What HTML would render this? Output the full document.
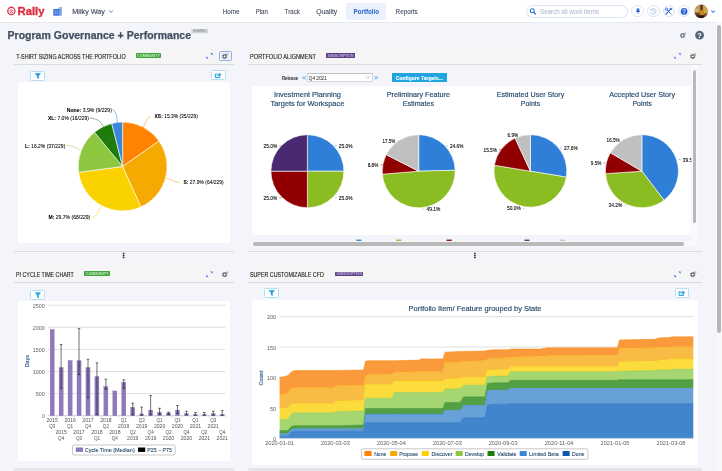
<!DOCTYPE html>
<html><head><meta charset="utf-8"><title>Rally</title>
<style>
html,body{margin:0;padding:0;}
body{width:722px;height:471px;overflow:hidden;background:#f3f5fa;font-family:'Liberation Sans',sans-serif;position:relative;color:#222;}
.abs{position:absolute;}
.hdr{position:absolute;left:0;top:0;width:722px;height:21.5px;background:#fff;border-bottom:0.5px solid #e4e8ef;}
.panel{position:absolute;background:#f5f5f6;}
.badge{position:absolute;height:5.1px;border-radius:0.8px;}
.hr{position:absolute;height:1.15px;background:#d9dbde;}
.white{position:absolute;background:#fff;border-radius:1.2px;}
.btn{position:absolute;border:0.7px solid #b3def5;background:#fff;border-radius:1.5px;box-sizing:border-box;}
.circ{position:absolute;width:12.6px;height:12.6px;border-radius:50%;border:0.6px solid #dbe4f4;box-sizing:border-box;background:#fff;top:4.9px;}
svg{position:absolute;left:0;top:0;overflow:visible;will-change:transform;}
svg text{font-family:'Liberation Sans',sans-serif;white-space:pre;}
</style></head><body>
<div class="hdr"></div>
<div class="abs" style="left:346.3px;top:2.9px;width:39.8px;height:16.9px;background:#ecf2fd;border-radius:1.5px;"></div>
<div class="abs" style="left:525.7px;top:4.6px;width:102.1px;height:13.4px;border:0.7px solid #d9e2f2;border-radius:7px;box-sizing:border-box;background:#fff;"></div>
<div class="circ" style="left:631.3px;"></div>
<div class="circ" style="left:647px;"></div>
<div class="circ" style="left:662.5px;"></div>
<div class="circ" style="left:677.8px;"></div>

<!-- scrollbar -->
<div class="abs" style="left:715.6px;top:22px;width:6.4px;height:449px;background:#f8f8f9;"></div>
<div class="abs" style="left:717.1px;top:25px;width:4px;height:308px;background:#b6b7b9;border-radius:2px;"></div>

<!-- panel backgrounds -->
<div class="panel" style="left:13.5px;top:47.8px;width:221px;height:16px;"></div>
<div class="panel" style="left:247.7px;top:47.8px;width:454.3px;height:16px;"></div>
<div class="panel" style="left:13.5px;top:266px;width:221px;height:16.4px;"></div>
<div class="panel" style="left:247.7px;top:266px;width:454.3px;height:16.4px;"></div>

<!-- panel 1 -->
<div class="badge" style="left:135.6px;top:53px;width:25.8px;background:#3fa53a;"></div>
<div class="hr" style="left:13.5px;top:63.55px;width:220.8px;"></div>
<div class="btn" style="left:219.2px;top:51.4px;width:12.9px;height:9.2px;border-color:#97afe8;background:#eef2f8;border-width:0.8px;"></div>
<div class="btn" style="left:30.3px;top:70.9px;width:15px;height:10.3px;"></div>
<div class="btn" style="left:211px;top:70.3px;width:14.8px;height:9.6px;"></div>
<div class="white" style="left:17.8px;top:82.3px;width:212.2px;height:160.3px;"></div>
<div class="hr" style="left:13.5px;top:250.8px;width:220.8px;height:1.1px;"></div>

<!-- panel 2 -->
<div class="badge" style="left:325.9px;top:53px;width:29.1px;height:4.7px;background:#5b3f85;"></div>
<div class="hr" style="left:247.7px;top:63.55px;width:454.3px;"></div>
<div class="abs" style="left:307px;top:73.1px;width:65.6px;height:9px;border:0.5px solid #d3d6da;border-top-color:#bcc0c5;border-radius:0.8px;box-sizing:border-box;background:#fff;"></div>
<div class="abs" style="left:391.9px;top:73.2px;width:54.8px;height:8.9px;background:#20a4e0;"></div>
<div class="abs" style="left:691.6px;top:64.7px;width:5.4px;height:181.5px;background:#fafafb;"></div>
<div class="abs" style="left:251.9px;top:241px;width:445.1px;height:5.2px;background:#f9f9fa;"></div>
<div class="white" style="left:251.9px;top:86.3px;width:439.4px;height:148.6px;border-radius:0;"></div>
<div class="abs" style="left:253.3px;top:242.3px;width:430.5px;height:3.3px;border-radius:1.65px;background:#b9b9ba;"></div>
<div class="abs" style="left:693.1px;top:70px;width:3.3px;height:152.5px;border-radius:1.65px;background:#b9b9ba;"></div>
<div class="hr" style="left:247.7px;top:250.8px;width:454.3px;height:1.1px;"></div>

<!-- panel 3 -->
<div class="badge" style="left:84.4px;top:271.3px;width:25.4px;background:#3fa53a;"></div>
<div class="hr" style="left:13.5px;top:281.85px;width:220.8px;"></div>
<div class="btn" style="left:30.3px;top:290.1px;width:15px;height:9.5px;"></div>
<div class="white" style="left:17.8px;top:300.8px;width:212.2px;height:160.1px;"></div>
<div class="hr" style="left:13.5px;top:468.2px;width:220.8px;height:3px;background:#e4e5e7;"></div>

<!-- panel 4 -->
<div class="badge" style="left:334.9px;top:271.5px;width:28.6px;height:4.8px;background:#5b3f85;"></div>
<div class="hr" style="left:247.7px;top:281.85px;width:454.3px;"></div>
<div class="btn" style="left:264.3px;top:288.1px;width:14.8px;height:9.7px;"></div>
<div class="btn" style="left:674.6px;top:288.1px;width:14.9px;height:9.7px;"></div>
<div class="white" style="left:251.9px;top:299.8px;width:446.5px;height:165.1px;border-radius:1.6px;"></div>
<div class="hr" style="left:247.7px;top:468.2px;width:454.3px;height:3px;background:#e4e5e7;"></div>

<svg width="722" height="471" viewBox="0 0 722 471">
 <!-- logo -->
 <circle cx="11.35" cy="10.9" r="3.6" fill="none" stroke="#de3a4c" stroke-width="1.35"/>
 <path d="M9.5 11.1Q11.35 8.4 13.2 11.1" fill="none" stroke="#de3a4c" stroke-width="1.0"/>
 <path d="M9.8 13.2L11.35 11.4L12.9 13.2" fill="none" stroke="#de3a4c" stroke-width="1.0"/>
 <path d="M59.2 7.1h2.7v8.6h-2.7z" fill="#86aaec"/>
 <path d="M59.3 7.1L57 9.2h2.3z" fill="#a9c3f2"/>
 <rect x="53.3" y="9.1" width="6.2" height="6.6" rx="0.5" fill="#3a70da"/>
 <path d="M54.2 11h4.6M54.2 12.5h4.6M54.2 14h4.6M55.6 9.9v5.2M57.4 9.9v5.2" stroke="#8fb3ee" stroke-width="0.45"/>
 <path d="M109.1 10.4l1.9 2l1.9-2" fill="none" stroke="#3a6fe0" stroke-width="0.9"/>
 <circle cx="532.3" cy="10.8" r="2.0" fill="none" stroke="#2f6fdc" stroke-width="1.05"/><path d="M533.9 12.5l1.6 1.7" stroke="#2f6fdc" stroke-width="1.2" stroke-linecap="round"/>
 <path d="M636.7 8.6h2.6v2.3h0.6v1.1h-1.5v1.6l-0.4 0.5l-0.4-0.5v-1.6h-1.5v-1.1h0.6z" fill="#2f62d8"/>
 <path d="M651.2 9.6a2.7 2.7 0 1 1 -0.5 2.6" fill="none" stroke="#8fb0e8" stroke-width="0.75"/><path d="M650.2 8.7l0.4 1.8l1.7-0.5z" fill="#8fb0e8"/><path d="M653.5 9.9v1.7l1.1 0.7" fill="none" stroke="#8fb0e8" stroke-width="0.7"/>
 <path d="M666 14.2l4.6-5" stroke="#2f62d8" stroke-width="1.1" stroke-linecap="round"/><path d="M667.3 9.9l3.8 4.2" stroke="#2f62d8" stroke-width="0.9" stroke-linecap="round"/><circle cx="666.6" cy="9.2" r="1.2" fill="none" stroke="#2f62d8" stroke-width="0.8"/><path d="M670.3 8.3l1.5 0.9" stroke="#2f62d8" stroke-width="1.3" stroke-linecap="round"/>
 <circle cx="684.1" cy="11.4" r="3.35" fill="#2f62d8"/><path d="M683 10.4a1.15 1.15 0 1 1 1.75 1q-0.65 0.35 -0.65 1" fill="none" stroke="#fff" stroke-width="0.8" stroke-linecap="round"/><circle cx="684.1" cy="13.6" r="0.48" fill="#fff"/>

 <defs><clipPath id="av"><circle cx="701.2" cy="11.4" r="6.85"/></clipPath><filter id="avb" x="-20%" y="-20%" width="140%" height="140%"><feGaussianBlur stdDeviation="0.55"/></filter></defs>
 <g clip-path="url(#av)"><g filter="url(#avb)">
  <rect x="693" y="3" width="17" height="17" fill="#9c7a3c"/>
  <rect x="694" y="5" width="6.5" height="4.5" fill="#b59d58"/>
  <rect x="694.3" y="8.6" width="5" height="3.6" fill="#c9b274"/>
  <rect x="703.2" y="6" width="5.5" height="7.5" fill="#c9aa50"/>
  <rect x="700.3" y="4" width="2.2" height="7" fill="#5e3420"/>
  <rect x="699.6" y="10.2" width="4.4" height="4.6" fill="#c88a1e"/>
  <rect x="694" y="13.2" width="4.5" height="4" fill="#5a3a22"/>
  <rect x="697.5" y="15.2" width="7" height="3.5" fill="#2a1810"/>
  <rect x="704" y="13.6" width="3.6" height="3" fill="#8a4a2a"/>
  <rect x="698.2" y="12.8" width="1.6" height="2.2" fill="#8a3030"/>
 </g></g>
 <path d="M711.2 10.5l1.9 1.9l1.9-1.9" fill="none" stroke="#5788e8" stroke-width="1.05"/>
 <rect x="191.4" y="29" width="16.6" height="4.3" fill="#d0d3d6"/>
 <!-- release arrows / select chevron -->
 <path d="M304.1 76.3l-1.4 1.5l1.4 1.5M305.8 76.3l-1.4 1.5l1.4 1.5" fill="none" stroke="#3a9ae0" stroke-width="0.8"/>
 <path d="M374.6 76.3l1.4 1.5l-1.4 1.5M376.3 76.3l1.4 1.5l-1.4 1.5" fill="none" stroke="#3a9ae0" stroke-width="0.8"/>
 <path d="M365.5 76.2l2.25 2.2l2.25-2.2" fill="none" stroke="#8a8e94" stroke-width="0.55"/>
 <!-- legend marks of alignment -->
 <rect x="356.4" y="239.6" width="5" height="1.3" fill="#2f7ed8"/><rect x="396.3" y="239.6" width="5" height="1.3" fill="#8bbc21"/><rect x="446.5" y="239.6" width="5.3" height="1.3" fill="#910000"/><rect x="524.5" y="239.6" width="5" height="1.3" fill="#492970"/><rect x="560" y="239.6" width="5" height="1.3" fill="#c0c0c0"/>
<text x="17.50" y="14.70" font-size="10.6" fill="#dc2f3f" font-weight="bold" textLength="27.00" lengthAdjust="spacingAndGlyphs" stroke="#dc2f3f" stroke-width="0.35">Rally</text><text x="72.30" y="14.20" font-size="8.0" fill="#3d4656" textLength="32.70" lengthAdjust="spacingAndGlyphs" stroke="#3d4656" stroke-width="0.15">Milky Way</text><text x="222.80" y="14.00" font-size="6.9" fill="#3d4656" textLength="16.80" lengthAdjust="spacingAndGlyphs" stroke="#3d4656" stroke-width="0.08">Home</text><text x="255.70" y="14.00" font-size="6.9" fill="#3d4656" textLength="12.20" lengthAdjust="spacingAndGlyphs" stroke="#3d4656" stroke-width="0.08">Plan</text><text x="284.60" y="14.00" font-size="6.9" fill="#3d4656" textLength="15.30" lengthAdjust="spacingAndGlyphs" stroke="#3d4656" stroke-width="0.08">Track</text><text x="316.30" y="14.00" font-size="6.9" fill="#3d4656" textLength="20.80" lengthAdjust="spacingAndGlyphs" stroke="#3d4656" stroke-width="0.08">Quality</text><text x="395.60" y="14.00" font-size="6.9" fill="#3d4656" textLength="22.20" lengthAdjust="spacingAndGlyphs" stroke="#3d4656" stroke-width="0.08">Reports</text><text x="353.50" y="14.00" font-size="6.9" fill="#1f62d0" font-weight="bold" textLength="25.60" lengthAdjust="spacingAndGlyphs">Portfolio</text><text x="540.00" y="13.80" font-size="6.8" fill="#a7b4cc" textLength="58.90" lengthAdjust="spacingAndGlyphs">Search all work items</text><text x="7.50" y="39.00" font-size="10.6" fill="#444e62" font-weight="bold" textLength="183.60" lengthAdjust="spacingAndGlyphs" stroke="#444e62" stroke-width="0.25">Program Governance + Performance</text><text x="193.20" y="32.40" font-size="3.6" fill="#8a8d91" textLength="13.20" lengthAdjust="spacingAndGlyphs">SHARED</text><text x="16.30" y="59.00" font-size="7" fill="#1a1a1a" textLength="109.30" lengthAdjust="spacingAndGlyphs" stroke="#1a1a1a" stroke-width="0.12">T-SHIRT SIZING ACROSS THE PORTFOLIO</text><text x="250.10" y="59.00" font-size="7" fill="#1a1a1a" textLength="65.70" lengthAdjust="spacingAndGlyphs" stroke="#1a1a1a" stroke-width="0.12">PORTFOLIO ALIGNMENT</text><text x="16.10" y="277.30" font-size="7" fill="#1a1a1a" textLength="57.60" lengthAdjust="spacingAndGlyphs" stroke="#1a1a1a" stroke-width="0.12">PI CYCLE TIME CHART</text><text x="249.90" y="277.30" font-size="7" fill="#1a1a1a" textLength="73.90" lengthAdjust="spacingAndGlyphs" stroke="#1a1a1a" stroke-width="0.12">SUPER CUSTOMIZABLE CFD</text><text x="281.90" y="80.40" font-size="5.7" fill="#3a3a3a" font-weight="bold" textLength="16.30" lengthAdjust="spacingAndGlyphs" stroke="#3a3a3a" stroke-width="0.1">Release</text><text x="308.80" y="79.80" font-size="5.4" fill="#222" textLength="18.00" lengthAdjust="spacingAndGlyphs">Q4 2021</text><text x="395.80" y="79.70" font-size="5.7" fill="#fff" font-weight="bold" textLength="47.20" lengthAdjust="spacingAndGlyphs" stroke="#fff" stroke-width="0.1">Configure Targets...</text>
<text x="137.10" y="56.90" font-size="3.7" fill="#c9e8c6" font-weight="bold" textLength="22.80" lengthAdjust="spacingAndGlyphs">COMMUNITY</text>
<text x="85.80" y="275.20" font-size="3.7" fill="#c9e8c6" font-weight="bold" textLength="22.60" lengthAdjust="spacingAndGlyphs">COMMUNITY</text>
<text x="327.50" y="56.70" font-size="3.7" fill="#c3b5dc" font-weight="bold" textLength="25.90" lengthAdjust="spacingAndGlyphs">SUBSCRIPTION</text>
<text x="336.50" y="275.30" font-size="3.7" fill="#c3b5dc" font-weight="bold" textLength="25.40" lengthAdjust="spacingAndGlyphs">SUBSCRIPTION</text>
<path d="M34.9 73.30000000000001h6l-2.2 2.6v3.1l-1.6-1v-2.1z" fill="#1d9ee0" stroke="#1d9ee0" stroke-width="0.2" stroke-linejoin="round"/><path d="M217.29999999999998 74.0h-2v3.6h4.6v-1.4" fill="none" stroke="#1d9ee0" stroke-width="1"/><path d="M218.89999999999998 72.8l2.6 1.9l-2.6 1.9v-1.2q-1.6 0-2.2 1.3q0-2.6 2.2-2.8z" fill="#1d9ee0"/><path d="M34.9 292.5h6l-2.2 2.6v3.1l-1.6-1v-2.1z" fill="#1d9ee0" stroke="#1d9ee0" stroke-width="0.2" stroke-linejoin="round"/><path d="M268.79999999999995 290.2h6l-2.2 2.6v3.1l-1.6-1v-2.1z" fill="#1d9ee0" stroke="#1d9ee0" stroke-width="0.2" stroke-linejoin="round"/><path d="M681.0 291.8h-2v3.6h4.6v-1.4" fill="none" stroke="#1d9ee0" stroke-width="1"/><path d="M682.6 290.6l2.6 1.9l-2.6 1.9v-1.2q-1.6 0-2.2 1.3q0-2.6 2.2-2.8z" fill="#1d9ee0"/><path d="M212.55 53.10h-2.3l2.3 2.3z" fill="#3a6fe0"/><path d="M206.25 58.50h2.3l-2.3 -2.3z" fill="#3a6fe0"/><circle cx="224.7" cy="56.4" r="1.55" fill="none" stroke="#3f4859" stroke-width="1.0"/><path d="M226.41 57.11L227.19 57.43" stroke="#3f4859" stroke-width="0.85"/><path d="M225.41 58.11L225.73 58.89" stroke="#3f4859" stroke-width="0.85"/><path d="M223.99 58.11L223.67 58.89" stroke="#3f4859" stroke-width="0.85"/><path d="M222.99 57.11L222.21 57.43" stroke="#3f4859" stroke-width="0.85"/><path d="M222.99 55.69L222.21 55.37" stroke="#3f4859" stroke-width="0.85"/><path d="M223.99 54.69L223.67 53.91" stroke="#3f4859" stroke-width="0.85"/><path d="M225.41 54.69L225.73 53.91" stroke="#3f4859" stroke-width="0.85"/><path d="M226.41 55.69L227.19 55.37" stroke="#3f4859" stroke-width="0.85"/><circle cx="227.2" cy="54.199999999999996" r="0.75" fill="none" stroke="#3f4859" stroke-width="0.45" opacity="0.75"/><path d="M680.65 53.20h-2.3l2.3 2.3z" fill="#3a6fe0"/><path d="M674.35 58.60h2.3l-2.3 -2.3z" fill="#3a6fe0"/><circle cx="692.8" cy="56.4" r="1.55" fill="none" stroke="#3f4859" stroke-width="1.0"/><path d="M694.51 57.11L695.29 57.43" stroke="#3f4859" stroke-width="0.85"/><path d="M693.51 58.11L693.83 58.89" stroke="#3f4859" stroke-width="0.85"/><path d="M692.09 58.11L691.77 58.89" stroke="#3f4859" stroke-width="0.85"/><path d="M691.09 57.11L690.31 57.43" stroke="#3f4859" stroke-width="0.85"/><path d="M691.09 55.69L690.31 55.37" stroke="#3f4859" stroke-width="0.85"/><path d="M692.09 54.69L691.77 53.91" stroke="#3f4859" stroke-width="0.85"/><path d="M693.51 54.69L693.83 53.91" stroke="#3f4859" stroke-width="0.85"/><path d="M694.51 55.69L695.29 55.37" stroke="#3f4859" stroke-width="0.85"/><circle cx="695.3" cy="54.199999999999996" r="0.75" fill="none" stroke="#3f4859" stroke-width="0.45" opacity="0.75"/><path d="M212.55 271.50h-2.3l2.3 2.3z" fill="#3a6fe0"/><path d="M206.25 276.90h2.3l-2.3 -2.3z" fill="#3a6fe0"/><circle cx="224.7" cy="274.6" r="1.55" fill="none" stroke="#3f4859" stroke-width="1.0"/><path d="M226.41 275.31L227.19 275.63" stroke="#3f4859" stroke-width="0.85"/><path d="M225.41 276.31L225.73 277.09" stroke="#3f4859" stroke-width="0.85"/><path d="M223.99 276.31L223.67 277.09" stroke="#3f4859" stroke-width="0.85"/><path d="M222.99 275.31L222.21 275.63" stroke="#3f4859" stroke-width="0.85"/><path d="M222.99 273.89L222.21 273.57" stroke="#3f4859" stroke-width="0.85"/><path d="M223.99 272.89L223.67 272.11" stroke="#3f4859" stroke-width="0.85"/><path d="M225.41 272.89L225.73 272.11" stroke="#3f4859" stroke-width="0.85"/><path d="M226.41 273.89L227.19 273.57" stroke="#3f4859" stroke-width="0.85"/><circle cx="227.2" cy="272.40000000000003" r="0.75" fill="none" stroke="#3f4859" stroke-width="0.45" opacity="0.75"/><path d="M680.65 271.50h-2.3l2.3 2.3z" fill="#3a6fe0"/><path d="M674.35 276.90h2.3l-2.3 -2.3z" fill="#3a6fe0"/><circle cx="692.8" cy="274.6" r="1.55" fill="none" stroke="#3f4859" stroke-width="1.0"/><path d="M694.51 275.31L695.29 275.63" stroke="#3f4859" stroke-width="0.85"/><path d="M693.51 276.31L693.83 277.09" stroke="#3f4859" stroke-width="0.85"/><path d="M692.09 276.31L691.77 277.09" stroke="#3f4859" stroke-width="0.85"/><path d="M691.09 275.31L690.31 275.63" stroke="#3f4859" stroke-width="0.85"/><path d="M691.09 273.89L690.31 273.57" stroke="#3f4859" stroke-width="0.85"/><path d="M692.09 272.89L691.77 272.11" stroke="#3f4859" stroke-width="0.85"/><path d="M693.51 272.89L693.83 272.11" stroke="#3f4859" stroke-width="0.85"/><path d="M694.51 273.89L695.29 273.57" stroke="#3f4859" stroke-width="0.85"/><circle cx="695.3" cy="272.40000000000003" r="0.75" fill="none" stroke="#3f4859" stroke-width="0.45" opacity="0.75"/><circle cx="682.6" cy="35.6" r="1.55" fill="none" stroke="#4a5468" stroke-width="1.0"/><path d="M684.31 36.31L685.09 36.63" stroke="#4a5468" stroke-width="0.85"/><path d="M683.31 37.31L683.63 38.09" stroke="#4a5468" stroke-width="0.85"/><path d="M681.89 37.31L681.57 38.09" stroke="#4a5468" stroke-width="0.85"/><path d="M680.89 36.31L680.11 36.63" stroke="#4a5468" stroke-width="0.85"/><path d="M680.89 34.89L680.11 34.57" stroke="#4a5468" stroke-width="0.85"/><path d="M681.89 33.89L681.57 33.11" stroke="#4a5468" stroke-width="0.85"/><path d="M683.31 33.89L683.63 33.11" stroke="#4a5468" stroke-width="0.85"/><path d="M684.31 34.89L685.09 34.57" stroke="#4a5468" stroke-width="0.85"/><circle cx="685.1" cy="33.4" r="0.75" fill="none" stroke="#4a5468" stroke-width="0.45" opacity="0.75"/><circle cx="699.6" cy="35.2" r="4.4" fill="#5a657d"/><text x="697.50" y="37.90" font-size="7.4" fill="#fff" font-weight="bold" textLength="4.20" lengthAdjust="spacingAndGlyphs">?</text><rect x="122.80" y="252.70" width="1.6" height="1.5" rx="0.3" fill="#2a2a2a"/><rect x="122.80" y="254.75" width="1.6" height="1.5" rx="0.3" fill="#2a2a2a"/><rect x="122.80" y="256.80" width="1.6" height="1.5" rx="0.3" fill="#2a2a2a"/><rect x="474.10" y="252.70" width="1.6" height="1.5" rx="0.3" fill="#2a2a2a"/><rect x="474.10" y="254.75" width="1.6" height="1.5" rx="0.3" fill="#2a2a2a"/><rect x="474.10" y="256.80" width="1.6" height="1.5" rx="0.3" fill="#2a2a2a"/>
<path d="M122.60 166.50L122.60 122.10A44.4 44.4 0 0 1 158.98 141.05Z" fill="#ff8200" stroke="#fff" stroke-width="0.6" stroke-linejoin="round"/>
<path d="M122.60 166.50L158.98 141.05A44.4 44.4 0 0 1 140.92 206.94Z" fill="#f6a900" stroke="#fff" stroke-width="0.6" stroke-linejoin="round"/>
<path d="M122.60 166.50L140.92 206.94A44.4 44.4 0 0 1 78.58 172.27Z" fill="#fad200" stroke="#fff" stroke-width="0.6" stroke-linejoin="round"/>
<path d="M122.60 166.50L78.58 172.27A44.4 44.4 0 0 1 94.48 132.14Z" fill="#8dc63f" stroke="#fff" stroke-width="0.6" stroke-linejoin="round"/>
<path d="M122.60 166.50L94.48 132.14A44.4 44.4 0 0 1 111.75 123.45Z" fill="#1e7c0b" stroke="#fff" stroke-width="0.6" stroke-linejoin="round"/>
<path d="M122.60 166.50L111.75 123.45A44.4 44.4 0 0 1 122.60 122.10Z" fill="#3a87d8" stroke="#fff" stroke-width="0.6" stroke-linejoin="round"/>
<path d="M112.5 109.6Q116.2 109.6 117.7 123.0" fill="none" stroke="#3a87d8" stroke-width="0.5"/><path d="M90.0 117.9Q100.3 118.8 103.4 126.7" fill="none" stroke="#1e7c0b" stroke-width="0.5"/><path d="M66.2 145.3Q74.4 145.6 80.5 150.5" fill="none" stroke="#8dc63f" stroke-width="0.5"/><path d="M150.6 116.3Q147.2 116.9 143.0 127.9" fill="none" stroke="#ff8200" stroke-width="0.5"/><path d="M179.5 182.4Q173.4 182.1 166.4 177.9" fill="none" stroke="#f6a900" stroke-width="0.5"/><path d="M92.1 217.2Q97.3 216.3 101.2 205.9" fill="none" stroke="#fad200" stroke-width="0.5"/>
<text x="66.80" y="111.50" font-size="5.4" fill="#000" stroke="#000" stroke-width="0.08" textLength="45.10" lengthAdjust="spacingAndGlyphs"><tspan font-weight="bold">None:</tspan> 3.9% (9/229)</text><text x="47.90" y="119.80" font-size="5.4" fill="#000" stroke="#000" stroke-width="0.08" textLength="41.10" lengthAdjust="spacingAndGlyphs"><tspan font-weight="bold">XL:</tspan> 7.0% (16/229)</text><text x="25.00" y="147.80" font-size="5.4" fill="#000" stroke="#000" stroke-width="0.08" textLength="40.30" lengthAdjust="spacingAndGlyphs"><tspan font-weight="bold">L:</tspan> 16.2% (37/229)</text><text x="154.60" y="118.20" font-size="5.4" fill="#000" stroke="#000" stroke-width="0.08" textLength="43.20" lengthAdjust="spacingAndGlyphs"><tspan font-weight="bold">XS:</tspan> 15.3% (35/229)</text><text x="183.50" y="184.30" font-size="5.4" fill="#000" stroke="#000" stroke-width="0.08" textLength="40.20" lengthAdjust="spacingAndGlyphs"><tspan font-weight="bold">S:</tspan> 27.9% (64/229)</text><text x="48.50" y="219.10" font-size="5.4" fill="#000" stroke="#000" stroke-width="0.08" textLength="41.80" lengthAdjust="spacingAndGlyphs"><tspan font-weight="bold">M:</tspan> 29.7% (68/229)</text>
<text x="273.90" y="96.90" font-size="8" fill="#274b6d" textLength="67.00" lengthAdjust="spacingAndGlyphs" stroke="#274b6d" stroke-width="0.18">Investment Planning</text><text x="270.55" y="105.70" font-size="8" fill="#274b6d" textLength="73.70" lengthAdjust="spacingAndGlyphs" stroke="#274b6d" stroke-width="0.18">Targets for Workspace</text><text x="386.70" y="96.90" font-size="8" fill="#274b6d" textLength="63.40" lengthAdjust="spacingAndGlyphs" stroke="#274b6d" stroke-width="0.18">Preliminary Feature</text><text x="402.85" y="105.70" font-size="8" fill="#274b6d" textLength="31.10" lengthAdjust="spacingAndGlyphs" stroke="#274b6d" stroke-width="0.18">Estimates</text><text x="496.70" y="96.90" font-size="8" fill="#274b6d" textLength="67.60" lengthAdjust="spacingAndGlyphs" stroke="#274b6d" stroke-width="0.18">Estimated User Story</text><text x="520.85" y="105.70" font-size="8" fill="#274b6d" textLength="19.30" lengthAdjust="spacingAndGlyphs" stroke="#274b6d" stroke-width="0.18">Points</text><text x="609.20" y="96.90" font-size="8" fill="#274b6d" textLength="65.80" lengthAdjust="spacingAndGlyphs" stroke="#274b6d" stroke-width="0.18">Accepted User Story</text><text x="632.45" y="105.70" font-size="8" fill="#274b6d" textLength="19.30" lengthAdjust="spacingAndGlyphs" stroke="#274b6d" stroke-width="0.18">Points</text>
<g clip-path="url(#c2)">
<clipPath id="c2"><rect x="251.9" y="86.3" width="439.4" height="148"/></clipPath>
<path d="M307.40 171.20L307.40 134.70A36.5 36.5 0 0 1 343.90 171.20Z" fill="#2f7ed8" stroke="#fff" stroke-width="0.6" stroke-linejoin="round"/>
<path d="M307.40 171.20L343.90 171.20A36.5 36.5 0 0 1 307.40 207.70Z" fill="#8bbc21" stroke="#fff" stroke-width="0.6" stroke-linejoin="round"/>
<path d="M307.40 171.20L307.40 207.70A36.5 36.5 0 0 1 270.90 171.20Z" fill="#910000" stroke="#fff" stroke-width="0.6" stroke-linejoin="round"/>
<path d="M307.40 171.20L270.90 171.20A36.5 36.5 0 0 1 307.40 134.70Z" fill="#492970" stroke="#fff" stroke-width="0.6" stroke-linejoin="round"/>
<text x="338.80" y="147.80" font-size="5.4" fill="#000" textLength="13.70" lengthAdjust="spacingAndGlyphs" stroke="#000" stroke-width="0.1">25.0%</text>
<path d="M336.6 145.9h-1.8" stroke="#2f7ed8" stroke-width="0.5"/>
<text x="338.80" y="199.60" font-size="5.4" fill="#000" textLength="13.70" lengthAdjust="spacingAndGlyphs" stroke="#000" stroke-width="0.1">25.0%</text>
<path d="M336.6 197.7h-1.8" stroke="#8bbc21" stroke-width="0.5"/>
<text x="263.50" y="199.60" font-size="5.4" fill="#000" textLength="13.70" lengthAdjust="spacingAndGlyphs" stroke="#000" stroke-width="0.1">25.0%</text>
<path d="M279.4 197.7h1.8" stroke="#910000" stroke-width="0.5"/>
<text x="263.50" y="147.80" font-size="5.4" fill="#000" textLength="13.70" lengthAdjust="spacingAndGlyphs" stroke="#000" stroke-width="0.1">25.0%</text>
<path d="M279.4 145.9h1.8" stroke="#492970" stroke-width="0.5"/>
<path d="M418.70 171.20L418.70 134.70A36.5 36.5 0 0 1 455.19 170.28Z" fill="#2f7ed8" stroke="#fff" stroke-width="0.6" stroke-linejoin="round"/>
<path d="M418.70 171.20L455.19 170.28A36.5 36.5 0 0 1 382.32 174.18Z" fill="#8bbc21" stroke="#fff" stroke-width="0.6" stroke-linejoin="round"/>
<path d="M418.70 171.20L382.32 174.18A36.5 36.5 0 0 1 386.18 154.63Z" fill="#910000" stroke="#fff" stroke-width="0.6" stroke-linejoin="round"/>
<path d="M418.70 171.20L386.18 154.63A36.5 36.5 0 0 1 418.70 134.70Z" fill="#c0c0c0" stroke="#fff" stroke-width="0.6" stroke-linejoin="round"/>
<text x="450.00" y="147.80" font-size="5.4" fill="#000" textLength="13.40" lengthAdjust="spacingAndGlyphs" stroke="#000" stroke-width="0.1">24.6%</text>
<path d="M447.8 145.9h-1.8" stroke="#2f7ed8" stroke-width="0.5"/>
<text x="426.50" y="210.90" font-size="5.4" fill="#000" textLength="13.80" lengthAdjust="spacingAndGlyphs" stroke="#000" stroke-width="0.1">49.1%</text>
<path d="M424.3 209.0h-1.8" stroke="#8bbc21" stroke-width="0.5"/>
<text x="367.70" y="166.70" font-size="5.4" fill="#000" textLength="10.70" lengthAdjust="spacingAndGlyphs" stroke="#000" stroke-width="0.1">8.8%</text>
<path d="M380.6 164.8h1.8" stroke="#910000" stroke-width="0.5"/>
<text x="382.40" y="142.60" font-size="5.4" fill="#000" textLength="12.80" lengthAdjust="spacingAndGlyphs" stroke="#000" stroke-width="0.1">17.5%</text>
<path d="M397.4 140.7h1.8" stroke="#c0c0c0" stroke-width="0.5"/>
<path d="M530.40 171.20L530.40 134.70A36.5 36.5 0 0 1 566.41 177.14Z" fill="#2f7ed8" stroke="#fff" stroke-width="0.6" stroke-linejoin="round"/>
<path d="M530.40 171.20L566.41 177.14A36.5 36.5 0 0 1 494.39 165.26Z" fill="#8bbc21" stroke="#fff" stroke-width="0.6" stroke-linejoin="round"/>
<path d="M530.40 171.20L494.39 165.26A36.5 36.5 0 0 1 515.07 138.08Z" fill="#910000" stroke="#fff" stroke-width="0.6" stroke-linejoin="round"/>
<path d="M530.40 171.20L515.07 138.08A36.5 36.5 0 0 1 530.40 134.70Z" fill="#c0c0c0" stroke="#fff" stroke-width="0.6" stroke-linejoin="round"/>
<text x="564.00" y="149.90" font-size="5.4" fill="#000" textLength="13.70" lengthAdjust="spacingAndGlyphs" stroke="#000" stroke-width="0.1">27.6%</text>
<path d="M561.8 148.0h-1.8" stroke="#2f7ed8" stroke-width="0.5"/>
<text x="507.00" y="210.30" font-size="5.4" fill="#000" textLength="13.70" lengthAdjust="spacingAndGlyphs" stroke="#000" stroke-width="0.1">50.0%</text>
<path d="M522.9 208.4h1.8" stroke="#8bbc21" stroke-width="0.5"/>
<text x="483.50" y="151.50" font-size="5.4" fill="#000" textLength="13.40" lengthAdjust="spacingAndGlyphs" stroke="#000" stroke-width="0.1">15.5%</text>
<path d="M499.1 149.6h1.8" stroke="#910000" stroke-width="0.5"/>
<text x="507.60" y="137.10" font-size="5.4" fill="#000" textLength="10.70" lengthAdjust="spacingAndGlyphs" stroke="#000" stroke-width="0.1">6.9%</text>
<path d="M520.5 135.2h1.8" stroke="#c0c0c0" stroke-width="0.5"/>
<path d="M641.90 171.20L641.90 134.70A36.5 36.5 0 0 1 664.06 200.21Z" fill="#2f7ed8" stroke="#fff" stroke-width="0.6" stroke-linejoin="round"/>
<path d="M641.90 171.20L664.06 200.21A36.5 36.5 0 0 1 605.48 173.67Z" fill="#8bbc21" stroke="#fff" stroke-width="0.6" stroke-linejoin="round"/>
<path d="M641.90 171.20L605.48 173.67A36.5 36.5 0 0 1 610.43 152.72Z" fill="#910000" stroke="#fff" stroke-width="0.6" stroke-linejoin="round"/>
<path d="M641.90 171.20L610.43 152.72A36.5 36.5 0 0 1 641.90 134.70Z" fill="#c0c0c0" stroke="#fff" stroke-width="0.6" stroke-linejoin="round"/>
<text x="682.80" y="161.50" font-size="5.4" fill="#000" textLength="13.70" lengthAdjust="spacingAndGlyphs" stroke="#000" stroke-width="0.1">39.5%</text>
<path d="M680.6 159.6h-1.8" stroke="#2f7ed8" stroke-width="0.5"/>
<text x="608.50" y="207.20" font-size="5.4" fill="#000" textLength="13.70" lengthAdjust="spacingAndGlyphs" stroke="#000" stroke-width="0.1">34.2%</text>
<path d="M624.4 205.3h1.8" stroke="#8bbc21" stroke-width="0.5"/>
<text x="590.80" y="164.90" font-size="5.4" fill="#000" textLength="10.60" lengthAdjust="spacingAndGlyphs" stroke="#000" stroke-width="0.1">9.5%</text>
<path d="M603.6 163.0h1.8" stroke="#910000" stroke-width="0.5"/>
<text x="606.60" y="141.70" font-size="5.4" fill="#000" textLength="13.10" lengthAdjust="spacingAndGlyphs" stroke="#000" stroke-width="0.1">16.5%</text>
<path d="M621.9 139.8h1.8" stroke="#c0c0c0" stroke-width="0.5"/>
</g>
<path d="M47.7 305.20H225.6" stroke="#dedede" stroke-width="0.95"/><text x="32.70" y="307.80" font-size="5.2" fill="#606060" textLength="12.00" lengthAdjust="spacingAndGlyphs">2500</text><path d="M47.7 327.30H225.6" stroke="#dedede" stroke-width="0.95"/><text x="32.70" y="329.90" font-size="5.2" fill="#606060" textLength="12.00" lengthAdjust="spacingAndGlyphs">2000</text><path d="M47.7 349.40H225.6" stroke="#dedede" stroke-width="0.95"/><text x="32.70" y="352.00" font-size="5.2" fill="#606060" textLength="12.00" lengthAdjust="spacingAndGlyphs">1500</text><path d="M47.7 371.50H225.6" stroke="#dedede" stroke-width="0.95"/><text x="32.70" y="374.10" font-size="5.2" fill="#606060" textLength="12.00" lengthAdjust="spacingAndGlyphs">1000</text><path d="M47.7 393.60H225.6" stroke="#dedede" stroke-width="0.95"/><text x="35.70" y="396.20" font-size="5.2" fill="#606060" textLength="9.00" lengthAdjust="spacingAndGlyphs">500</text><path d="M47.7 415.70H225.6" stroke="#dedede" stroke-width="0.95"/><text x="41.90" y="418.30" font-size="5.2" fill="#606060" textLength="2.80" lengthAdjust="spacingAndGlyphs">0</text><path d="M47.7 415.7H225.6" stroke="#c0d0e0" stroke-width="0.6"/><rect x="50.15" y="329.51" width="4.1" height="86.19" fill="#9079ba" stroke="#8167ad" stroke-width="0.3"/><text x="46.49" y="422.00" font-size="5.2" fill="#555" textLength="11.40" lengthAdjust="spacingAndGlyphs">2015</text><text x="49.15" y="428.10" font-size="5.2" fill="#555" textLength="6.10" lengthAdjust="spacingAndGlyphs">Q3</text><path d="M56.67 415.7v2" stroke="#c0d0e0" stroke-width="0.5"/><rect x="59.09" y="367.52" width="4.1" height="48.18" fill="#9079ba" stroke="#8167ad" stroke-width="0.3"/><path d="M61.14 388.30V344.54M59.84 344.54h2.6M59.84 388.30h2.6" stroke="#111" stroke-width="0.6" fill="none"/><text x="55.44" y="433.80" font-size="5.2" fill="#555" textLength="11.40" lengthAdjust="spacingAndGlyphs">2015</text><text x="58.09" y="439.90" font-size="5.2" fill="#555" textLength="6.10" lengthAdjust="spacingAndGlyphs">Q4</text><path d="M65.62 415.7v2" stroke="#c0d0e0" stroke-width="0.5"/><rect x="68.05" y="360.45" width="4.1" height="55.25" fill="#9079ba" stroke="#8167ad" stroke-width="0.3"/><text x="64.39" y="422.00" font-size="5.2" fill="#555" textLength="11.40" lengthAdjust="spacingAndGlyphs">2016</text><text x="67.05" y="428.10" font-size="5.2" fill="#555" textLength="6.10" lengthAdjust="spacingAndGlyphs">Q1</text><path d="M74.57 415.7v2" stroke="#c0d0e0" stroke-width="0.5"/><rect x="76.99" y="360.67" width="4.1" height="55.03" fill="#9079ba" stroke="#8167ad" stroke-width="0.3"/><path d="M79.04 374.59V328.63M77.74 328.63h2.6M77.74 374.59h2.6" stroke="#111" stroke-width="0.6" fill="none"/><text x="73.34" y="433.80" font-size="5.2" fill="#555" textLength="11.40" lengthAdjust="spacingAndGlyphs">2017</text><text x="75.99" y="439.90" font-size="5.2" fill="#555" textLength="6.10" lengthAdjust="spacingAndGlyphs">Q3</text><path d="M83.52 415.7v2" stroke="#c0d0e0" stroke-width="0.5"/><rect x="85.95" y="367.52" width="4.1" height="48.18" fill="#9079ba" stroke="#8167ad" stroke-width="0.3"/><path d="M88.00 397.80V359.34M86.70 359.34h2.6M86.70 397.80h2.6" stroke="#111" stroke-width="0.6" fill="none"/><text x="82.30" y="422.00" font-size="5.2" fill="#555" textLength="11.40" lengthAdjust="spacingAndGlyphs">2017</text><text x="84.95" y="428.10" font-size="5.2" fill="#555" textLength="6.10" lengthAdjust="spacingAndGlyphs">Q4</text><path d="M92.47 415.7v2" stroke="#c0d0e0" stroke-width="0.5"/><rect x="94.89" y="376.58" width="4.1" height="39.12" fill="#9079ba" stroke="#8167ad" stroke-width="0.3"/><path d="M96.94 414.37V362.88M95.64 362.88h2.6M95.64 414.37h2.6" stroke="#111" stroke-width="0.6" fill="none"/><text x="91.24" y="433.80" font-size="5.2" fill="#555" textLength="11.40" lengthAdjust="spacingAndGlyphs">2018</text><text x="93.89" y="439.90" font-size="5.2" fill="#555" textLength="6.10" lengthAdjust="spacingAndGlyphs">Q1</text><path d="M101.42 415.7v2" stroke="#c0d0e0" stroke-width="0.5"/><rect x="103.84" y="386.66" width="4.1" height="29.04" fill="#9079ba" stroke="#8167ad" stroke-width="0.3"/><path d="M105.89 389.18V379.24M104.59 379.24h2.6M104.59 389.18h2.6" stroke="#111" stroke-width="0.6" fill="none"/><text x="100.19" y="422.00" font-size="5.2" fill="#555" textLength="11.40" lengthAdjust="spacingAndGlyphs">2018</text><text x="102.84" y="428.10" font-size="5.2" fill="#555" textLength="6.10" lengthAdjust="spacingAndGlyphs">Q2</text><path d="M110.37 415.7v2" stroke="#c0d0e0" stroke-width="0.5"/><rect x="112.80" y="390.95" width="4.1" height="24.75" fill="#9079ba" stroke="#8167ad" stroke-width="0.3"/><text x="109.14" y="433.80" font-size="5.2" fill="#555" textLength="11.40" lengthAdjust="spacingAndGlyphs">2018</text><text x="111.80" y="439.90" font-size="5.2" fill="#555" textLength="6.10" lengthAdjust="spacingAndGlyphs">Q4</text><path d="M119.32 415.7v2" stroke="#c0d0e0" stroke-width="0.5"/><rect x="121.74" y="382.33" width="4.1" height="33.37" fill="#9079ba" stroke="#8167ad" stroke-width="0.3"/><path d="M123.79 388.30V379.81M122.49 379.81h2.6M122.49 388.30h2.6" stroke="#111" stroke-width="0.6" fill="none"/><text x="120.74" y="422.00" font-size="5.2" fill="#555" textLength="6.10" lengthAdjust="spacingAndGlyphs">Q1</text><text x="118.09" y="428.10" font-size="5.2" fill="#555" textLength="11.40" lengthAdjust="spacingAndGlyphs">2019</text><path d="M128.27 415.7v2" stroke="#c0d0e0" stroke-width="0.5"/><rect x="130.69" y="407.30" width="4.1" height="8.40" fill="#9079ba" stroke="#8167ad" stroke-width="0.3"/><path d="M132.75 414.82V403.19M131.44 403.19h2.6M131.44 414.82h2.6" stroke="#111" stroke-width="0.6" fill="none"/><text x="129.69" y="433.80" font-size="5.2" fill="#555" textLength="6.10" lengthAdjust="spacingAndGlyphs">Q2</text><text x="127.05" y="439.90" font-size="5.2" fill="#555" textLength="11.40" lengthAdjust="spacingAndGlyphs">2019</text><path d="M137.22 415.7v2" stroke="#c0d0e0" stroke-width="0.5"/><rect x="139.64" y="413.93" width="4.1" height="1.77" fill="#9079ba" stroke="#8167ad" stroke-width="0.3"/><path d="M141.69 415.26V407.08M140.39 407.08h2.6M140.39 415.26h2.6" stroke="#111" stroke-width="0.6" fill="none"/><text x="138.64" y="422.00" font-size="5.2" fill="#555" textLength="6.10" lengthAdjust="spacingAndGlyphs">Q3</text><text x="136.00" y="428.10" font-size="5.2" fill="#555" textLength="11.40" lengthAdjust="spacingAndGlyphs">2019</text><path d="M146.17 415.7v2" stroke="#c0d0e0" stroke-width="0.5"/><rect x="148.59" y="410.13" width="4.1" height="5.57" fill="#9079ba" stroke="#8167ad" stroke-width="0.3"/><path d="M150.64 414.82V395.59M149.34 395.59h2.6M149.34 414.82h2.6" stroke="#111" stroke-width="0.6" fill="none"/><text x="147.59" y="433.80" font-size="5.2" fill="#555" textLength="6.10" lengthAdjust="spacingAndGlyphs">Q4</text><text x="144.94" y="439.90" font-size="5.2" fill="#555" textLength="11.40" lengthAdjust="spacingAndGlyphs">2019</text><path d="M155.12 415.7v2" stroke="#c0d0e0" stroke-width="0.5"/><rect x="157.54" y="412.38" width="4.1" height="3.32" fill="#9079ba" stroke="#8167ad" stroke-width="0.3"/><path d="M159.59 414.37V408.27M158.29 408.27h2.6M158.29 414.37h2.6" stroke="#111" stroke-width="0.6" fill="none"/><text x="156.54" y="422.00" font-size="5.2" fill="#555" textLength="6.10" lengthAdjust="spacingAndGlyphs">Q1</text><text x="153.89" y="428.10" font-size="5.2" fill="#555" textLength="11.40" lengthAdjust="spacingAndGlyphs">2020</text><path d="M164.07 415.7v2" stroke="#c0d0e0" stroke-width="0.5"/><rect x="166.49" y="412.96" width="4.1" height="2.74" fill="#9079ba" stroke="#8167ad" stroke-width="0.3"/><path d="M168.54 414.37V412.16M167.24 412.16h2.6M167.24 414.37h2.6" stroke="#111" stroke-width="0.6" fill="none"/><text x="165.49" y="433.80" font-size="5.2" fill="#555" textLength="6.10" lengthAdjust="spacingAndGlyphs">Q2</text><text x="162.84" y="439.90" font-size="5.2" fill="#555" textLength="11.40" lengthAdjust="spacingAndGlyphs">2020</text><path d="M173.02 415.7v2" stroke="#c0d0e0" stroke-width="0.5"/><rect x="175.44" y="410.13" width="4.1" height="5.57" fill="#9079ba" stroke="#8167ad" stroke-width="0.3"/><path d="M177.49 413.49V405.53M176.19 405.53h2.6M176.19 413.49h2.6" stroke="#111" stroke-width="0.6" fill="none"/><text x="174.44" y="422.00" font-size="5.2" fill="#555" textLength="6.10" lengthAdjust="spacingAndGlyphs">Q3</text><text x="171.79" y="428.10" font-size="5.2" fill="#555" textLength="11.40" lengthAdjust="spacingAndGlyphs">2020</text><path d="M181.97 415.7v2" stroke="#c0d0e0" stroke-width="0.5"/><rect x="184.39" y="413.71" width="4.1" height="1.99" fill="#9079ba" stroke="#8167ad" stroke-width="0.3"/><path d="M186.44 414.82V411.28M185.14 411.28h2.6M185.14 414.82h2.6" stroke="#111" stroke-width="0.6" fill="none"/><text x="183.39" y="433.80" font-size="5.2" fill="#555" textLength="6.10" lengthAdjust="spacingAndGlyphs">Q4</text><text x="180.75" y="439.90" font-size="5.2" fill="#555" textLength="11.40" lengthAdjust="spacingAndGlyphs">2020</text><path d="M190.92 415.7v2" stroke="#c0d0e0" stroke-width="0.5"/><rect x="193.34" y="414.59" width="4.1" height="1.10" fill="#9079ba" stroke="#8167ad" stroke-width="0.3"/><path d="M195.39 415.26V412.52M194.09 412.52h2.6M194.09 415.26h2.6" stroke="#111" stroke-width="0.6" fill="none"/><text x="192.34" y="422.00" font-size="5.2" fill="#555" textLength="6.10" lengthAdjust="spacingAndGlyphs">Q1</text><text x="189.69" y="428.10" font-size="5.2" fill="#555" textLength="11.40" lengthAdjust="spacingAndGlyphs">2021</text><path d="M199.87 415.7v2" stroke="#c0d0e0" stroke-width="0.5"/><rect x="202.29" y="414.59" width="4.1" height="1.10" fill="#9079ba" stroke="#8167ad" stroke-width="0.3"/><path d="M204.34 415.26V412.52M203.04 412.52h2.6M203.04 415.26h2.6" stroke="#111" stroke-width="0.6" fill="none"/><text x="201.29" y="433.80" font-size="5.2" fill="#555" textLength="6.10" lengthAdjust="spacingAndGlyphs">Q2</text><text x="198.65" y="439.90" font-size="5.2" fill="#555" textLength="11.40" lengthAdjust="spacingAndGlyphs">2021</text><path d="M208.82 415.7v2" stroke="#c0d0e0" stroke-width="0.5"/><rect x="211.24" y="413.71" width="4.1" height="1.99" fill="#9079ba" stroke="#8167ad" stroke-width="0.3"/><path d="M213.29 415.26V411.28M211.99 411.28h2.6M211.99 415.26h2.6" stroke="#111" stroke-width="0.6" fill="none"/><text x="210.24" y="422.00" font-size="5.2" fill="#555" textLength="6.10" lengthAdjust="spacingAndGlyphs">Q3</text><text x="207.59" y="428.10" font-size="5.2" fill="#555" textLength="11.40" lengthAdjust="spacingAndGlyphs">2021</text><path d="M217.77 415.7v2" stroke="#c0d0e0" stroke-width="0.5"/><rect x="220.19" y="414.59" width="4.1" height="1.10" fill="#9079ba" stroke="#8167ad" stroke-width="0.3"/><path d="M222.24 415.26V410.62M220.94 410.62h2.6M220.94 415.26h2.6" stroke="#111" stroke-width="0.6" fill="none"/><text x="219.19" y="433.80" font-size="5.2" fill="#555" textLength="6.10" lengthAdjust="spacingAndGlyphs">Q4</text><text x="216.54" y="439.90" font-size="5.2" fill="#555" textLength="11.40" lengthAdjust="spacingAndGlyphs">2021</text><path d="M226.72 415.7v2" stroke="#c0d0e0" stroke-width="0.5"/><g transform="translate(28.6,361) rotate(-90)"><text x="-6.00" y="0.00" font-size="5.8" fill="#4d759e" font-weight="bold" textLength="12.00" lengthAdjust="spacingAndGlyphs" stroke="#4d759e" stroke-width="0.15">Days</text></g><rect x="72.5" y="445" width="102.7" height="10" rx="1.5" fill="#fff" stroke="#909090" stroke-width="0.5"/><rect x="75.8" y="447.5" width="7.2" height="4.4" fill="#9079ba"/><text x="84.80" y="451.90" font-size="5.6" fill="#274b6d" textLength="49.90" lengthAdjust="spacingAndGlyphs" stroke="#274b6d" stroke-width="0.1">Cycle Time (Median)</text><rect x="138" y="447.5" width="7.2" height="4.4" fill="#000"/><text x="147.30" y="451.90" font-size="5.6" fill="#274b6d" textLength="24.60" lengthAdjust="spacingAndGlyphs" stroke="#274b6d" stroke-width="0.1">P25 – P75</text>
<path d="M279.6 316.60H693.3" stroke="#dedede" stroke-width="0.95"/><text x="266.90" y="319.40" font-size="5.2" fill="#606060" textLength="9.10" lengthAdjust="spacingAndGlyphs">200</text><path d="M279.6 347.02H693.3" stroke="#dedede" stroke-width="0.95"/><text x="266.90" y="349.82" font-size="5.2" fill="#606060" textLength="9.10" lengthAdjust="spacingAndGlyphs">150</text><path d="M279.6 377.45H693.3" stroke="#dedede" stroke-width="0.95"/><text x="266.90" y="380.25" font-size="5.2" fill="#606060" textLength="9.10" lengthAdjust="spacingAndGlyphs">100</text><path d="M279.6 407.88H693.3" stroke="#dedede" stroke-width="0.95"/><text x="269.90" y="410.68" font-size="5.2" fill="#606060" textLength="6.10" lengthAdjust="spacingAndGlyphs">50</text><path d="M279.6 438.30H693.3" stroke="#dedede" stroke-width="0.95"/><text x="273.20" y="440.50" font-size="5.2" fill="#606060" textLength="2.80" lengthAdjust="spacingAndGlyphs">0</text><path d="M279.6 377.29 L284.0 376.67 L288.0 375.45 L291.5 371.77 L295.0 370.54 L334.0 370.54 L336.0 370.54 L363.5 369.93 L365.5 361.35 L368.0 360.74 L392.0 360.74 L394.5 360.74 L419.0 360.12 L421.0 358.90 L443.0 358.90 L445.0 352.15 L460.0 351.54 L463.5 351.54 L485.0 350.93 L487.5 350.32 L495.0 349.70 L508.0 349.70 L510.5 349.09 L540.0 349.09 L548.0 347.86 L617.5 347.86 L619.5 339.89 L655.0 339.28 L658.0 338.06 L670.0 337.44 L672.0 336.83 L693.3 336.83 L693.3 346.64 L672.0 346.64 L670.0 347.25 L658.0 347.25 L655.0 347.86 L619.5 348.48 L617.5 355.22 L548.0 355.83 L540.0 356.45 L510.5 357.06 L508.0 357.67 L495.0 358.28 L487.5 358.90 L485.0 360.74 L463.5 361.35 L460.0 361.96 L445.0 361.96 L443.0 371.77 L421.0 371.77 L419.0 371.77 L394.5 372.38 L392.0 374.22 L368.0 374.84 L365.5 376.06 L363.5 385.26 L336.0 385.87 L334.0 387.71 L295.0 387.71 L291.5 388.32 L288.0 393.23 L284.0 394.45 L279.6 394.45Z" fill="#fa9a3c"/><path d="M279.6 377.29 L284.0 376.67 L288.0 375.45 L291.5 371.77 L295.0 370.54 L334.0 370.54 L336.0 370.54 L363.5 369.93 L365.5 361.35 L368.0 360.74 L392.0 360.74 L394.5 360.74 L419.0 360.12 L421.0 358.90 L443.0 358.90 L445.0 352.15 L460.0 351.54 L463.5 351.54 L485.0 350.93 L487.5 350.32 L495.0 349.70 L508.0 349.70 L510.5 349.09 L540.0 349.09 L548.0 347.86 L617.5 347.86 L619.5 339.89 L655.0 339.28 L658.0 338.06 L670.0 337.44 L672.0 336.83 L693.3 336.83" fill="none" stroke="#ff8200" stroke-width="0.5"/><path d="M279.6 394.45 L284.0 394.45 L288.0 393.23 L291.5 388.32 L295.0 387.71 L334.0 387.71 L336.0 385.87 L363.5 385.26 L365.5 376.06 L368.0 374.84 L392.0 374.22 L394.5 372.38 L419.0 371.77 L421.0 371.77 L443.0 371.77 L445.0 361.96 L460.0 361.96 L463.5 361.35 L485.0 360.74 L487.5 358.90 L495.0 358.28 L508.0 357.67 L510.5 357.06 L540.0 356.45 L548.0 355.83 L617.5 355.22 L619.5 348.48 L655.0 347.86 L658.0 347.25 L670.0 347.25 L672.0 346.64 L693.3 346.64 L693.3 358.90 L672.0 358.90 L670.0 359.51 L658.0 360.74 L655.0 361.35 L619.5 361.96 L617.5 366.87 L548.0 366.87 L540.0 366.87 L510.5 366.87 L508.0 369.32 L495.0 369.93 L487.5 369.93 L485.0 377.29 L463.5 377.29 L460.0 378.51 L445.0 379.13 L443.0 380.97 L421.0 380.97 L419.0 380.97 L394.5 380.97 L392.0 384.64 L368.0 384.64 L365.5 384.64 L363.5 400.58 L336.0 401.19 L334.0 403.65 L295.0 403.65 L291.5 404.26 L288.0 407.32 L284.0 408.55 L279.6 408.55Z" fill="#f8bc44"/><path d="M279.6 394.45 L284.0 394.45 L288.0 393.23 L291.5 388.32 L295.0 387.71 L334.0 387.71 L336.0 385.87 L363.5 385.26 L365.5 376.06 L368.0 374.84 L392.0 374.22 L394.5 372.38 L419.0 371.77 L421.0 371.77 L443.0 371.77 L445.0 361.96 L460.0 361.96 L463.5 361.35 L485.0 360.74 L487.5 358.90 L495.0 358.28 L508.0 357.67 L510.5 357.06 L540.0 356.45 L548.0 355.83 L617.5 355.22 L619.5 348.48 L655.0 347.86 L658.0 347.25 L670.0 347.25 L672.0 346.64 L693.3 346.64" fill="none" stroke="#f6a900" stroke-width="0.5"/><path d="M279.6 408.55 L284.0 408.55 L288.0 407.32 L291.5 404.26 L295.0 403.65 L334.0 403.65 L336.0 401.19 L363.5 400.58 L365.5 384.64 L368.0 384.64 L392.0 384.64 L394.5 380.97 L419.0 380.97 L421.0 380.97 L443.0 380.97 L445.0 379.13 L460.0 378.51 L463.5 377.29 L485.0 377.29 L487.5 369.93 L495.0 369.93 L508.0 369.32 L510.5 366.87 L540.0 366.87 L548.0 366.87 L617.5 366.87 L619.5 361.96 L655.0 361.35 L658.0 360.74 L670.0 359.51 L672.0 358.90 L693.3 358.90 L693.3 369.32 L672.0 369.32 L670.0 369.93 L658.0 369.93 L655.0 370.54 L619.5 371.16 L617.5 371.77 L548.0 371.77 L540.0 371.77 L510.5 371.77 L508.0 376.06 L495.0 376.06 L487.5 376.67 L485.0 385.26 L463.5 385.26 L460.0 388.93 L445.0 388.93 L443.0 392.61 L421.0 392.61 L419.0 392.61 L394.5 392.61 L392.0 398.13 L368.0 398.13 L365.5 398.13 L363.5 411.00 L336.0 411.62 L334.0 412.84 L295.0 412.84 L291.5 414.07 L288.0 418.97 L284.0 419.58 L279.6 419.58Z" fill="#fbdc3c"/><path d="M279.6 408.55 L284.0 408.55 L288.0 407.32 L291.5 404.26 L295.0 403.65 L334.0 403.65 L336.0 401.19 L363.5 400.58 L365.5 384.64 L368.0 384.64 L392.0 384.64 L394.5 380.97 L419.0 380.97 L421.0 380.97 L443.0 380.97 L445.0 379.13 L460.0 378.51 L463.5 377.29 L485.0 377.29 L487.5 369.93 L495.0 369.93 L508.0 369.32 L510.5 366.87 L540.0 366.87 L548.0 366.87 L617.5 366.87 L619.5 361.96 L655.0 361.35 L658.0 360.74 L670.0 359.51 L672.0 358.90 L693.3 358.90" fill="none" stroke="#f9d400" stroke-width="0.5"/><path d="M279.6 419.58 L284.0 419.58 L288.0 418.97 L291.5 414.07 L295.0 412.84 L334.0 412.84 L336.0 411.62 L363.5 411.00 L365.5 398.13 L368.0 398.13 L392.0 398.13 L394.5 392.61 L419.0 392.61 L421.0 392.61 L443.0 392.61 L445.0 388.93 L460.0 388.93 L463.5 385.26 L485.0 385.26 L487.5 376.67 L495.0 376.06 L508.0 376.06 L510.5 371.77 L540.0 371.77 L548.0 371.77 L617.5 371.77 L619.5 371.16 L655.0 370.54 L658.0 369.93 L670.0 369.93 L672.0 369.32 L693.3 369.32 L693.3 379.74 L672.0 379.74 L670.0 379.74 L658.0 379.74 L655.0 379.74 L619.5 379.74 L617.5 380.35 L548.0 380.35 L540.0 380.35 L510.5 380.35 L508.0 382.80 L495.0 382.80 L487.5 383.42 L485.0 396.90 L463.5 396.90 L460.0 402.42 L445.0 402.42 L443.0 408.55 L421.0 408.55 L419.0 408.55 L394.5 408.55 L392.0 408.55 L368.0 408.55 L365.5 408.55 L363.5 425.10 L336.0 425.71 L334.0 425.71 L295.0 425.71 L291.5 426.33 L288.0 430.62 L284.0 430.62 L279.6 430.62Z" fill="#a6d671"/><path d="M279.6 419.58 L284.0 419.58 L288.0 418.97 L291.5 414.07 L295.0 412.84 L334.0 412.84 L336.0 411.62 L363.5 411.00 L365.5 398.13 L368.0 398.13 L392.0 398.13 L394.5 392.61 L419.0 392.61 L421.0 392.61 L443.0 392.61 L445.0 388.93 L460.0 388.93 L463.5 385.26 L485.0 385.26 L487.5 376.67 L495.0 376.06 L508.0 376.06 L510.5 371.77 L540.0 371.77 L548.0 371.77 L617.5 371.77 L619.5 371.16 L655.0 370.54 L658.0 369.93 L670.0 369.93 L672.0 369.32 L693.3 369.32" fill="none" stroke="#8dc63f" stroke-width="0.5"/><path d="M279.6 430.62 L284.0 430.62 L288.0 430.62 L291.5 426.33 L295.0 425.71 L334.0 425.71 L336.0 425.71 L363.5 425.10 L365.5 408.55 L368.0 408.55 L392.0 408.55 L394.5 408.55 L419.0 408.55 L421.0 408.55 L443.0 408.55 L445.0 402.42 L460.0 402.42 L463.5 396.90 L485.0 396.90 L487.5 383.42 L495.0 382.80 L508.0 382.80 L510.5 380.35 L540.0 380.35 L548.0 380.35 L617.5 380.35 L619.5 379.74 L655.0 379.74 L658.0 379.74 L670.0 379.74 L672.0 379.74 L693.3 379.74 L693.3 388.32 L672.0 388.32 L670.0 388.32 L658.0 388.32 L655.0 388.32 L619.5 388.32 L617.5 388.32 L548.0 388.32 L540.0 388.32 L510.5 388.32 L508.0 390.16 L495.0 390.16 L487.5 390.77 L485.0 405.49 L463.5 405.49 L460.0 410.39 L445.0 410.39 L443.0 414.07 L421.0 414.07 L419.0 414.07 L394.5 414.07 L392.0 414.07 L368.0 414.07 L365.5 414.07 L363.5 428.78 L336.0 428.78 L334.0 428.78 L295.0 428.78 L291.5 429.39 L288.0 433.68 L284.0 433.68 L279.6 433.68Z" fill="#52a043"/><path d="M279.6 430.62 L284.0 430.62 L288.0 430.62 L291.5 426.33 L295.0 425.71 L334.0 425.71 L336.0 425.71 L363.5 425.10 L365.5 408.55 L368.0 408.55 L392.0 408.55 L394.5 408.55 L419.0 408.55 L421.0 408.55 L443.0 408.55 L445.0 402.42 L460.0 402.42 L463.5 396.90 L485.0 396.90 L487.5 383.42 L495.0 382.80 L508.0 382.80 L510.5 380.35 L540.0 380.35 L548.0 380.35 L617.5 380.35 L619.5 379.74 L655.0 379.74 L658.0 379.74 L670.0 379.74 L672.0 379.74 L693.3 379.74" fill="none" stroke="#2e8b1e" stroke-width="0.5"/><path d="M279.6 433.68 L284.0 433.68 L288.0 433.68 L291.5 429.39 L295.0 428.78 L334.0 428.78 L336.0 428.78 L363.5 428.78 L365.5 414.07 L368.0 414.07 L392.0 414.07 L394.5 414.07 L419.0 414.07 L421.0 414.07 L443.0 414.07 L445.0 410.39 L460.0 410.39 L463.5 405.49 L485.0 405.49 L487.5 390.77 L495.0 390.16 L508.0 390.16 L510.5 388.32 L540.0 388.32 L548.0 388.32 L617.5 388.32 L619.5 388.32 L655.0 388.32 L658.0 388.32 L670.0 388.32 L672.0 388.32 L693.3 388.32 L693.3 403.65 L672.0 403.65 L670.0 403.65 L658.0 403.65 L655.0 403.65 L619.5 403.65 L617.5 403.65 L548.0 403.65 L540.0 403.65 L510.5 403.65 L508.0 404.26 L495.0 404.26 L487.5 404.87 L485.0 417.75 L463.5 417.75 L460.0 422.65 L445.0 422.65 L443.0 422.65 L421.0 422.65 L419.0 422.65 L394.5 422.65 L392.0 422.65 L368.0 422.65 L365.5 422.65 L363.5 431.23 L336.0 431.23 L334.0 431.23 L295.0 431.23 L291.5 431.84 L288.0 436.13 L284.0 436.13 L279.6 436.13Z" fill="#68a0d8"/><path d="M279.6 433.68 L284.0 433.68 L288.0 433.68 L291.5 429.39 L295.0 428.78 L334.0 428.78 L336.0 428.78 L363.5 428.78 L365.5 414.07 L368.0 414.07 L392.0 414.07 L394.5 414.07 L419.0 414.07 L421.0 414.07 L443.0 414.07 L445.0 410.39 L460.0 410.39 L463.5 405.49 L485.0 405.49 L487.5 390.77 L495.0 390.16 L508.0 390.16 L510.5 388.32 L540.0 388.32 L548.0 388.32 L617.5 388.32 L619.5 388.32 L655.0 388.32 L658.0 388.32 L670.0 388.32 L672.0 388.32 L693.3 388.32" fill="none" stroke="#3a87d8" stroke-width="0.5"/><path d="M279.6 436.13 L284.0 436.13 L288.0 436.13 L291.5 431.84 L295.0 431.23 L334.0 431.23 L336.0 431.23 L363.5 431.23 L365.5 422.65 L368.0 422.65 L392.0 422.65 L394.5 422.65 L419.0 422.65 L421.0 422.65 L443.0 422.65 L445.0 422.65 L460.0 422.65 L463.5 417.75 L485.0 417.75 L487.5 404.87 L495.0 404.26 L508.0 404.26 L510.5 403.65 L540.0 403.65 L548.0 403.65 L617.5 403.65 L619.5 403.65 L655.0 403.65 L658.0 403.65 L670.0 403.65 L672.0 403.65 L693.3 403.65 L693.3 438.3 L279.6 438.3Z" fill="#4186cc"/><path d="M279.6 436.13 L284.0 436.13 L288.0 436.13 L291.5 431.84 L295.0 431.23 L334.0 431.23 L336.0 431.23 L363.5 431.23 L365.5 422.65 L368.0 422.65 L392.0 422.65 L394.5 422.65 L419.0 422.65 L421.0 422.65 L443.0 422.65 L445.0 422.65 L460.0 422.65 L463.5 417.75 L485.0 417.75 L487.5 404.87 L495.0 404.26 L508.0 404.26 L510.5 403.65 L540.0 403.65 L548.0 403.65 L617.5 403.65 L619.5 403.65 L655.0 403.65 L658.0 403.65 L670.0 403.65 L672.0 403.65 L693.3 403.65" fill="none" stroke="#1465c0" stroke-width="0.5"/><path d="M279.6 438.3H693.3" stroke="#c0d0e0" stroke-width="0.5"/><text x="265.15" y="445.00" font-size="5.2" fill="#606060" textLength="28.90" lengthAdjust="spacingAndGlyphs">2020-01-01</text><text x="320.95" y="445.00" font-size="5.2" fill="#606060" textLength="28.90" lengthAdjust="spacingAndGlyphs">2020-03-03</text><text x="376.95" y="445.00" font-size="5.2" fill="#606060" textLength="28.90" lengthAdjust="spacingAndGlyphs">2020-05-04</text><text x="432.95" y="445.00" font-size="5.2" fill="#606060" textLength="28.90" lengthAdjust="spacingAndGlyphs">2020-07-03</text><text x="488.65" y="445.00" font-size="5.2" fill="#606060" textLength="28.90" lengthAdjust="spacingAndGlyphs">2020-09-03</text><text x="544.65" y="445.00" font-size="5.2" fill="#606060" textLength="28.90" lengthAdjust="spacingAndGlyphs">2020-11-04</text><text x="600.55" y="445.00" font-size="5.2" fill="#606060" textLength="28.90" lengthAdjust="spacingAndGlyphs">2021-01-05</text><text x="656.55" y="445.00" font-size="5.2" fill="#606060" textLength="28.90" lengthAdjust="spacingAndGlyphs">2021-03-08</text><g transform="translate(262.6,378) rotate(-90)"><text x="-7.50" y="0.00" font-size="5.8" fill="#4d759e" font-weight="bold" textLength="15.00" lengthAdjust="spacingAndGlyphs" stroke="#4d759e" stroke-width="0.15">Count</text></g><text x="408.50" y="310.80" font-size="8" fill="#274b6d" textLength="133.00" lengthAdjust="spacingAndGlyphs" stroke="#274b6d" stroke-width="0.18">Portfolio Item/ Feature grouped by State</text><rect x="361.4" y="448.8" width="226.5" height="10.5" rx="1.6" fill="#fff" stroke="#909090" stroke-width="0.5"/><rect x="364.5" y="451.1" width="7.1" height="5" rx="0.6" fill="#ff8200"/><text x="374.20" y="456.00" font-size="5.6" fill="#274b6d" textLength="12.20" lengthAdjust="spacingAndGlyphs" stroke="#274b6d" stroke-width="0.1">None</text><rect x="390.2" y="451.1" width="7.1" height="5" rx="0.6" fill="#f6a900"/><text x="399.20" y="456.00" font-size="5.6" fill="#274b6d" textLength="19.00" lengthAdjust="spacingAndGlyphs" stroke="#274b6d" stroke-width="0.1">Propose</text><rect x="421.7" y="451.1" width="7.1" height="5" rx="0.6" fill="#fad200"/><text x="431.40" y="456.00" font-size="5.6" fill="#274b6d" textLength="21.10" lengthAdjust="spacingAndGlyphs" stroke="#274b6d" stroke-width="0.1">Discover</text><rect x="455.6" y="451.1" width="7.1" height="5" rx="0.6" fill="#8dc63f"/><text x="465.00" y="456.00" font-size="5.6" fill="#274b6d" textLength="19.00" lengthAdjust="spacingAndGlyphs" stroke="#274b6d" stroke-width="0.1">Develop</text><rect x="487.5" y="451.1" width="7.1" height="5" rx="0.6" fill="#1e7c0b"/><text x="497.20" y="456.00" font-size="5.6" fill="#274b6d" textLength="19.40" lengthAdjust="spacingAndGlyphs" stroke="#274b6d" stroke-width="0.1">Validate</text><rect x="519.7" y="451.1" width="7.1" height="5" rx="0.6" fill="#3a87d8"/><text x="529.00" y="456.00" font-size="5.6" fill="#274b6d" textLength="29.80" lengthAdjust="spacingAndGlyphs" stroke="#274b6d" stroke-width="0.1">Limited Beta</text><rect x="562.6" y="451.1" width="7.1" height="5" rx="0.6" fill="#1056b0"/><text x="572.00" y="456.00" font-size="5.6" fill="#274b6d" textLength="12.40" lengthAdjust="spacingAndGlyphs" stroke="#274b6d" stroke-width="0.1">Done</text>
</svg>
</body></html>
